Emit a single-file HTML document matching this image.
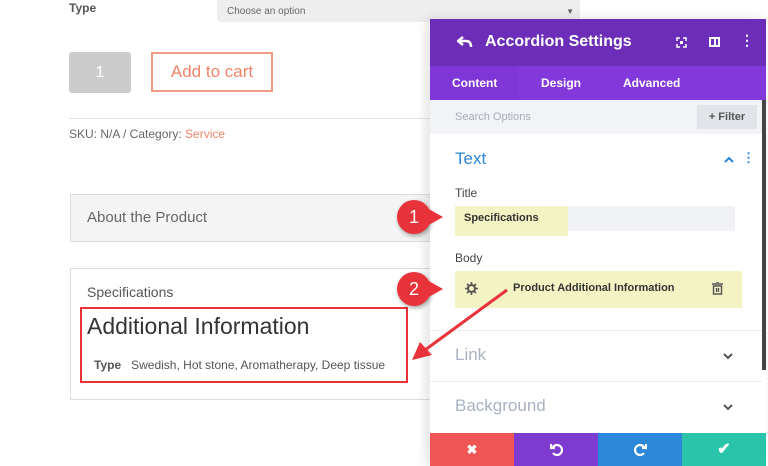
<html><head><style>
body{margin:0;width:768px;height:466px;overflow:hidden;background:#fff;font-family:"Liberation Sans",sans-serif;position:relative}
.a{position:absolute}
.badge{position:absolute;width:34px;height:34px;border-radius:50%;background:#e8333a;color:#fff;font-size:18px;text-align:center;line-height:34px;box-shadow:1px 2px 4px rgba(0,0,0,.35)}
.badge:after{content:"";position:absolute;right:-12px;top:8px;border-left:16px solid #e8333a;border-top:9px solid transparent;border-bottom:9px solid transparent}
</style></head><body>
<div class="a" style="left:69px;top:1px;font-size:12px;font-weight:bold;color:#555">Type</div>
<div class="a" style="left:217px;top:0;width:363px;height:22px;background:#eee;border-radius:0 0 3px 3px;font-size:10px;color:#666;line-height:24px;padding-left:10px;box-sizing:border-box">Choose an option<span style="position:absolute;right:6px;font-size:8px">▼</span></div>
<div class="a" style="left:69px;top:52px;width:62px;height:41px;background:#ccc;border-radius:3px;color:#fff;font-size:16px;text-align:center;line-height:41px">1</div>
<div class="a" style="left:151px;top:52px;width:122px;height:40px;border:2px solid #f29a86;box-sizing:border-box;color:#f08468;font-size:17px;text-align:center;line-height:36px">Add to cart</div>
<div class="a" style="left:69px;top:118px;width:361px;height:1px;background:#e3e3e3"></div>
<div class="a" style="left:69px;top:127px;font-size:12px;color:#666">SKU: N/A / Category: <span style="color:#f08468">Service</span></div>
<div class="a" style="left:70px;top:194px;width:370px;height:48px;background:#f4f4f4;border:1px solid #ddd;box-sizing:border-box;font-size:15px;color:#666;line-height:46px;padding-left:16px">About the Product</div>
<div class="a" style="left:70px;top:268px;width:370px;height:132px;border:1px solid #ddd;box-sizing:border-box"></div>
<div class="a" style="left:87px;top:284px;font-size:14px;color:#555">Specifications</div>
<div class="a" style="left:80px;top:307px;width:328px;height:76px;border:2px solid #e8333a;box-sizing:border-box"></div>
<div class="a" style="left:87px;top:313px;font-size:23px;color:#333">Additional Information</div>
<div class="a" style="left:94px;top:358px;font-size:12px;color:#555"><b>Type</b>&nbsp;&nbsp;&nbsp;Swedish, Hot stone, Aromatherapy, Deep tissue</div>
<div class="a" style="left:430px;top:19px;width:336px;height:447px;background:#fff;box-shadow:-4px 0 12px rgba(0,0,0,.12)">
 <div class="a" style="left:0;top:0;width:336px;height:47px;background:#6c2eb9;color:#fff">
  <svg class="a" style="left:27px;top:17px" width="16" height="12"><path d="M6 1L1 5l5 4M1 5h8c4 0 5 3 5 6" stroke="#fff" stroke-width="2.5" fill="none"/></svg>
  <div class="a" style="left:55px;top:14px;font-size:16px;font-weight:bold">Accordion Settings</div>
  <svg class="a" style="left:246px;top:18px" width="11" height="11"><path d="M1 4V1h3M7 1h3v3M10 7v3H7M4 10H1V7" stroke="#fff" stroke-width="1.5" fill="none"/><rect x="4" y="4" width="3" height="3" fill="#fff"/></svg>
  <div class="a" style="left:279px;top:18px;width:11px;height:10px;border:2px solid #fff;box-sizing:border-box"></div>
  <div class="a" style="left:284px;top:18px;width:2px;height:10px;background:#fff"></div>
  <div class="a" style="left:310px;top:13px;font-size:14px;font-weight:bold">⋮</div>
 </div>
 <div class="a" style="left:0;top:47px;width:336px;height:34px;background:#8338dc;color:#fff;font-size:12px;font-weight:bold">
  <div class="a" style="left:0;top:0;width:88px;height:34px;background:#7e36d6"></div>
  <div class="a" style="left:22px;top:10px">Content</div>
  <div class="a" style="left:111px;top:10px">Design</div>
  <div class="a" style="left:193px;top:10px">Advanced</div>
 </div>
 <div class="a" style="left:0;top:81px;width:336px;height:34px;background:#f1f3f6">
  <div class="a" style="left:25px;top:11px;font-size:11px;color:#aab">Search Options</div>
  <div class="a" style="left:267px;top:5px;width:60px;height:24px;background:#e1e4e9;font-size:11px;color:#555;font-weight:bold;line-height:24px;text-align:center">+ Filter</div>
 </div>
 <div class="a" style="left:332px;top:81px;width:4px;height:270px;background:#444"></div>
 <div class="a" style="left:25px;top:130px;font-size:17px;color:#2b87da">Text</div>
 <svg class="a" style="left:294px;top:137px" width="10" height="7"><path d="M1 6l4-4 4 4" stroke="#2b87da" stroke-width="2" fill="none"/></svg>
 <div class="a" style="left:312px;top:131px;font-size:13px;color:#2b87da;font-weight:bold">⋮</div>
 <div class="a" style="left:25px;top:167px;font-size:12px;color:#444">Title</div>
 <div class="a" style="left:25px;top:187px;width:280px;height:25px;background:#f0f2f6"></div>
 <div class="a" style="left:25px;top:187px;width:113px;height:30px;background:#f3f3c4;font-size:11px;color:#333;font-weight:bold;line-height:25px;padding-left:9px;box-sizing:border-box">Specifications</div>
 <div class="a" style="left:25px;top:232px;font-size:12px;color:#444">Body</div>
 <div class="a" style="left:25px;top:252px;width:287px;height:37px;background:#f3f3c4;font-size:11px;color:#333;font-weight:bold;line-height:34px">
  <svg class="a" style="left:10px;top:11px" width="13" height="13"><circle cx="6.5" cy="6.5" r="3.5" stroke="#555" stroke-width="2" fill="none"/><path d="M6.5 0v3M6.5 10v3M0 6.5h3M10 6.5h3M2 2l2 2M9 9l2 2M11 2L9 4M2 11l2-2" stroke="#555" stroke-width="1.6"/></svg>
  <span style="position:absolute;left:58px">Product Additional Information</span>
  <svg class="a" style="left:257px;top:11px" width="11" height="13"><path d="M0 2h11M4 0h3M1.5 4h8v8h-8zM4.5 6v4M6.5 6v4" stroke="#555" stroke-width="1.4" fill="none"/></svg></div>
 <div class="a" style="left:0;top:311px;width:332px;height:1px;background:#eee"></div>
 <div class="a" style="left:25px;top:326px;font-size:17px;color:#a9b2c3">Link</div>
 <svg class="a" style="left:293px;top:334px" width="10" height="7"><path d="M1 1l4 4 4-4" stroke="#555" stroke-width="2" fill="none"/></svg>
 <div class="a" style="left:0;top:362px;width:332px;height:1px;background:#eee"></div>
 <div class="a" style="left:25px;top:377px;font-size:17px;color:#a9b2c3">Background</div>
 <svg class="a" style="left:293px;top:385px" width="10" height="7"><path d="M1 1l4 4 4-4" stroke="#555" stroke-width="2" fill="none"/></svg>
 <div class="a" style="left:0;top:414px;width:84px;height:33px;background:#ef5555;color:#fff;text-align:center;line-height:33px;font-weight:bold;font-size:13px">✖</div>
 <div class="a" style="left:84px;top:414px;width:84px;height:33px;background:#7d3bcf"><svg class="a" style="left:36px;top:10px" width="13" height="13"><path d="M3 4A5 5 0 1 1 3 10M1 1v4h4" stroke="#fff" stroke-width="2.2" fill="none"/></svg></div>
 <div class="a" style="left:168px;top:414px;width:84px;height:33px;background:#2b87da"><svg class="a" style="left:36px;top:10px" width="13" height="13"><path d="M10 4A5 5 0 1 0 10 10M12 1v4H8" stroke="#fff" stroke-width="2.2" fill="none"/></svg></div>
 <div class="a" style="left:252px;top:414px;width:84px;height:33px;background:#29c4a9;color:#fff;text-align:center;line-height:33px;font-weight:bold">✔</div>
</div>
<div class="badge" style="left:397px;top:200px">1</div>
<div class="badge" style="left:397px;top:272px">2</div>
<svg class="a" style="left:0;top:0" width="768" height="466"><line x1="507" y1="290" x2="425" y2="350" stroke="#e8333a" stroke-width="3"/><polygon points="412,360 420,342 432,355" fill="#e8333a"/></svg>
</body></html>
